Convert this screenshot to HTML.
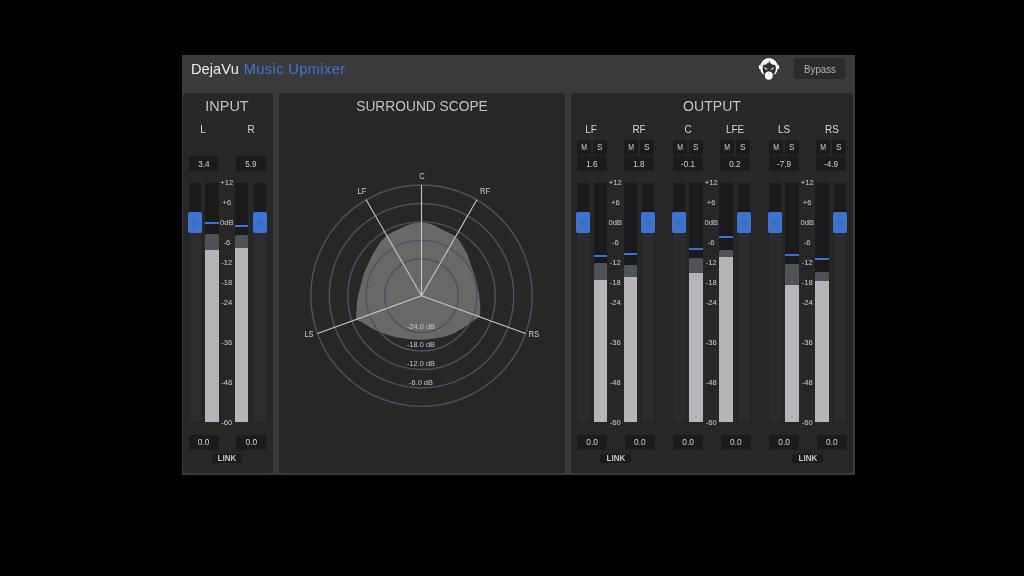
<!DOCTYPE html>
<html><head><meta charset="utf-8"><title>DejaVu Music Upmixer</title><style>
html,body{margin:0;padding:0;background:#000;}
body{width:1024px;height:576px;position:relative;overflow:hidden;font-family:"Liberation Sans",sans-serif;}
.a{position:absolute;}
.win{left:182px;top:55px;width:673px;height:420px;background:#3a3a3a;}
.panel{background:#272727;border-radius:3px;top:92.5px;height:380.3px;}
.t{position:absolute;white-space:nowrap;text-align:center;transform:translate(-50%,-50%);line-height:1;}
.box{background:#1b1b1d;border-radius:1.5px;}
.slotU{background:#1b1b1d;border-radius:1px;}
.slotL{background:#2c2d30;}
.thumb{background:#3d74d4;border-radius:2px;}
.gl{background:#3f63a8;height:1px;}
.mbg{background:#1a1a1d;}
.mdk{background:#4f5257;border-radius:1.5px 1.5px 0 0;}
.mlt{background:#b5b5b9;}
.pk{background:#3c74d6;height:2px;}
svg{position:absolute;left:0;top:0;}
#root{position:absolute;left:0;top:0;width:1024px;height:576px;will-change:transform;}
</style></head><body><div id="root">
<div class="a win"></div>
<div class="a panel" style="left:182.6px;width:90.3px;"></div>
<div class="a panel" style="left:279px;width:285.7px;"></div>
<div class="a panel" style="left:571.1px;width:282px;"></div>
<div class="t" style="left:214.9px;top:69.4px;font-size:14.6px;color:#ececec;letter-spacing:0.1px;">DejaVu</div>
<div class="t" style="left:294.6px;top:69.4px;font-size:14.6px;color:#3d78d8;letter-spacing:0.4px;">Music Upmixer</div>
<div class="a" style="left:794.2px;top:58.2px;width:50.7px;height:21.2px;background:#2b2b2b;border-radius:2.5px;"></div>
<div class="t" style="left:819.6px;top:70.2px;font-size:10px;color:#b4b4b4;transform:translate(-50%,-50%) scaleX(0.97);">Bypass</div>
<div class="t" style="left:227.4px;top:105.8px;font-size:14.6px;color:#c2c2c6;transform:translate(-50%,-50%) scaleX(0.99);">INPUT</div>
<div class="t" style="left:421.6px;top:105.8px;font-size:14.6px;color:#c2c2c6;transform:translate(-50%,-50%) scaleX(0.943);">SURROUND SCOPE</div>
<div class="t" style="left:711.6px;top:105.8px;font-size:14.6px;color:#c2c2c6;transform:translate(-50%,-50%) scaleX(0.963);">OUTPUT</div>
<div class="t" style="left:203.0px;top:129.2px;font-size:11px;color:#d6d6d6;transform:translate(-50%,-50%) scaleX(0.9);">L</div>
<div class="a box" style="left:188.6px;top:156.3px;width:29.9px;height:14.5px;"></div>
<div class="t" style="left:203.5px;top:163.8px;font-size:8.4px;color:#d0d0d0;transform:translate(-50%,-50%) scaleX(0.97);">3.4</div>
<div class="a box" style="left:188.6px;top:435.2px;width:30.2px;height:14.5px;"></div>
<div class="t" style="left:203.7px;top:442.4px;font-size:8.4px;color:#d0d0d0;">0.0</div>
<div class="t" style="left:251.1px;top:129.2px;font-size:11px;color:#d6d6d6;transform:translate(-50%,-50%) scaleX(0.9);">R</div>
<div class="a box" style="left:235.7px;top:156.3px;width:29.9px;height:14.5px;"></div>
<div class="t" style="left:250.6px;top:163.8px;font-size:8.4px;color:#d0d0d0;transform:translate(-50%,-50%) scaleX(0.97);">5.9</div>
<div class="a box" style="left:236.2px;top:435.2px;width:30.2px;height:14.5px;"></div>
<div class="t" style="left:251.3px;top:442.4px;font-size:8.4px;color:#d0d0d0;">0.0</div>
<div class="a slotU" style="left:188.9px;top:183px;width:12px;height:40px;"></div>
<div class="a slotL" style="left:188.9px;top:223px;width:12px;height:199.2px;"></div>
<div class="a thumb" style="left:187.9px;top:212px;width:14px;height:21px;"></div>
<div class="a gl" style="left:192.4px;top:219.5px;width:5.0px;"></div>
<div class="a gl" style="left:191.3px;top:222.0px;width:7.2px;"></div>
<div class="a gl" style="left:192.4px;top:224.7px;width:5.0px;"></div>
<div class="a mbg" style="left:205.0px;top:183px;width:13.5px;height:239.2px;"></div>
<div class="a pk" style="left:205.0px;top:221.9px;width:13.5px;"></div>
<div class="a mdk" style="left:205.0px;top:233.8px;width:13.5px;height:17.4px;"></div>
<div class="a mlt" style="left:205.0px;top:250.2px;width:13.5px;height:172.0px;"></div>
<div class="a mbg" style="left:235.1px;top:183px;width:13.4px;height:239.2px;"></div>
<div class="a pk" style="left:235.1px;top:224.9px;width:13.4px;"></div>
<div class="a mdk" style="left:235.1px;top:234.9px;width:13.4px;height:14.0px;"></div>
<div class="a mlt" style="left:235.1px;top:247.9px;width:13.4px;height:174.3px;"></div>
<div class="a slotU" style="left:253.7px;top:183px;width:12px;height:40px;"></div>
<div class="a slotL" style="left:253.7px;top:223px;width:12px;height:199.2px;"></div>
<div class="a thumb" style="left:252.7px;top:212px;width:14px;height:21px;"></div>
<div class="a gl" style="left:257.2px;top:219.5px;width:5.0px;"></div>
<div class="a gl" style="left:256.1px;top:222.0px;width:7.2px;"></div>
<div class="a gl" style="left:257.2px;top:224.7px;width:5.0px;"></div>
<div class="t" style="left:226.8px;top:183.1px;font-size:7.6px;color:#d0d0d0;">+12</div>
<div class="t" style="left:226.8px;top:203.1px;font-size:7.6px;color:#d0d0d0;">+6</div>
<div class="t" style="left:226.8px;top:223.1px;font-size:7.6px;color:#d0d0d0;">0dB</div>
<div class="t" style="left:226.8px;top:243.1px;font-size:7.6px;color:#d0d0d0;">-6</div>
<div class="t" style="left:226.8px;top:263.1px;font-size:7.6px;color:#d0d0d0;">-12</div>
<div class="t" style="left:226.8px;top:283.1px;font-size:7.6px;color:#d0d0d0;">-18</div>
<div class="t" style="left:226.8px;top:303.1px;font-size:7.6px;color:#d0d0d0;">-24</div>
<div class="t" style="left:226.8px;top:343.1px;font-size:7.6px;color:#d0d0d0;">-36</div>
<div class="t" style="left:226.8px;top:383.1px;font-size:7.6px;color:#d0d0d0;">-48</div>
<div class="t" style="left:226.8px;top:423.1px;font-size:7.6px;color:#d0d0d0;">-60</div>
<div class="t" style="left:590.5px;top:129.2px;font-size:11px;color:#d6d6d6;transform:translate(-50%,-50%) scaleX(0.9);">LF</div>
<div class="a box" style="left:577.1px;top:140.2px;width:14.1px;height:14.4px;"></div>
<div class="a box" style="left:592.8px;top:140.2px;width:14.1px;height:14.4px;"></div>
<div class="t" style="left:584.2px;top:147.3px;font-size:8.4px;color:#d0d0d0;transform:translate(-50%,-50%) scaleX(0.82);">M</div>
<div class="t" style="left:599.8px;top:147.3px;font-size:8.4px;color:#d0d0d0;">S</div>
<div class="a box" style="left:577.1px;top:156.3px;width:29.9px;height:14.5px;"></div>
<div class="t" style="left:592.0px;top:163.8px;font-size:8.4px;color:#d0d0d0;transform:translate(-50%,-50%) scaleX(0.97);">1.6</div>
<div class="a box" style="left:577.1px;top:435.2px;width:30.2px;height:14.5px;"></div>
<div class="t" style="left:592.2px;top:442.4px;font-size:8.4px;color:#d0d0d0;">0.0</div>
<div class="t" style="left:638.8px;top:129.2px;font-size:11px;color:#d6d6d6;transform:translate(-50%,-50%) scaleX(0.9);">RF</div>
<div class="a box" style="left:624.1px;top:140.2px;width:14.1px;height:14.4px;"></div>
<div class="a box" style="left:639.8px;top:140.2px;width:14.1px;height:14.4px;"></div>
<div class="t" style="left:631.2px;top:147.3px;font-size:8.4px;color:#d0d0d0;transform:translate(-50%,-50%) scaleX(0.82);">M</div>
<div class="t" style="left:646.8px;top:147.3px;font-size:8.4px;color:#d0d0d0;">S</div>
<div class="a box" style="left:624.1px;top:156.3px;width:29.9px;height:14.5px;"></div>
<div class="t" style="left:639.0px;top:163.8px;font-size:8.4px;color:#d0d0d0;transform:translate(-50%,-50%) scaleX(0.97);">1.8</div>
<div class="a box" style="left:624.8px;top:435.2px;width:30.2px;height:14.5px;"></div>
<div class="t" style="left:639.9px;top:442.4px;font-size:8.4px;color:#d0d0d0;">0.0</div>
<div class="a slotU" style="left:577.4px;top:183px;width:12px;height:40px;"></div>
<div class="a slotL" style="left:577.4px;top:223px;width:12px;height:199.2px;"></div>
<div class="a thumb" style="left:576.4px;top:212px;width:14px;height:21px;"></div>
<div class="a gl" style="left:580.9px;top:219.5px;width:5.0px;"></div>
<div class="a gl" style="left:579.8px;top:222.0px;width:7.2px;"></div>
<div class="a gl" style="left:580.9px;top:224.7px;width:5.0px;"></div>
<div class="a mbg" style="left:593.5px;top:183px;width:13.5px;height:239.2px;"></div>
<div class="a pk" style="left:593.5px;top:254.8px;width:13.5px;"></div>
<div class="a mdk" style="left:593.5px;top:263.1px;width:13.5px;height:17.5px;"></div>
<div class="a mlt" style="left:593.5px;top:279.6px;width:13.5px;height:142.6px;"></div>
<div class="a mbg" style="left:623.5px;top:183px;width:13.4px;height:239.2px;"></div>
<div class="a pk" style="left:623.5px;top:253.3px;width:13.4px;"></div>
<div class="a mdk" style="left:623.5px;top:264.7px;width:13.4px;height:13.0px;"></div>
<div class="a mlt" style="left:623.5px;top:276.7px;width:13.4px;height:145.5px;"></div>
<div class="a slotU" style="left:642.1px;top:183px;width:12px;height:40px;"></div>
<div class="a slotL" style="left:642.1px;top:223px;width:12px;height:199.2px;"></div>
<div class="a thumb" style="left:641.1px;top:212px;width:14px;height:21px;"></div>
<div class="a gl" style="left:645.6px;top:219.5px;width:5.0px;"></div>
<div class="a gl" style="left:644.5px;top:222.0px;width:7.2px;"></div>
<div class="a gl" style="left:645.6px;top:224.7px;width:5.0px;"></div>
<div class="t" style="left:615.3px;top:183.1px;font-size:7.6px;color:#d0d0d0;">+12</div>
<div class="t" style="left:615.3px;top:203.1px;font-size:7.6px;color:#d0d0d0;">+6</div>
<div class="t" style="left:615.3px;top:223.1px;font-size:7.6px;color:#d0d0d0;">0dB</div>
<div class="t" style="left:615.3px;top:243.1px;font-size:7.6px;color:#d0d0d0;">-6</div>
<div class="t" style="left:615.3px;top:263.1px;font-size:7.6px;color:#d0d0d0;">-12</div>
<div class="t" style="left:615.3px;top:283.1px;font-size:7.6px;color:#d0d0d0;">-18</div>
<div class="t" style="left:615.3px;top:303.1px;font-size:7.6px;color:#d0d0d0;">-24</div>
<div class="t" style="left:615.3px;top:343.1px;font-size:7.6px;color:#d0d0d0;">-36</div>
<div class="t" style="left:615.3px;top:383.1px;font-size:7.6px;color:#d0d0d0;">-48</div>
<div class="t" style="left:615.3px;top:423.1px;font-size:7.6px;color:#d0d0d0;">-60</div>
<div class="t" style="left:688.3px;top:129.2px;font-size:11px;color:#d6d6d6;transform:translate(-50%,-50%) scaleX(0.9);">C</div>
<div class="a box" style="left:673.0px;top:140.2px;width:14.1px;height:14.4px;"></div>
<div class="a box" style="left:688.7px;top:140.2px;width:14.1px;height:14.4px;"></div>
<div class="t" style="left:680.1px;top:147.3px;font-size:8.4px;color:#d0d0d0;transform:translate(-50%,-50%) scaleX(0.82);">M</div>
<div class="t" style="left:695.7px;top:147.3px;font-size:8.4px;color:#d0d0d0;">S</div>
<div class="a box" style="left:673.0px;top:156.3px;width:29.9px;height:14.5px;"></div>
<div class="t" style="left:687.9px;top:163.8px;font-size:8.4px;color:#d0d0d0;transform:translate(-50%,-50%) scaleX(0.97);">-0.1</div>
<div class="a box" style="left:673.0px;top:435.2px;width:30.2px;height:14.5px;"></div>
<div class="t" style="left:688.1px;top:442.4px;font-size:8.4px;color:#d0d0d0;">0.0</div>
<div class="t" style="left:735.2px;top:129.2px;font-size:11px;color:#d6d6d6;transform:translate(-50%,-50%) scaleX(0.9);">LFE</div>
<div class="a box" style="left:720.0px;top:140.2px;width:14.1px;height:14.4px;"></div>
<div class="a box" style="left:735.7px;top:140.2px;width:14.1px;height:14.4px;"></div>
<div class="t" style="left:727.1px;top:147.3px;font-size:8.4px;color:#d0d0d0;transform:translate(-50%,-50%) scaleX(0.82);">M</div>
<div class="t" style="left:742.7px;top:147.3px;font-size:8.4px;color:#d0d0d0;">S</div>
<div class="a box" style="left:720.0px;top:156.3px;width:29.9px;height:14.5px;"></div>
<div class="t" style="left:734.9px;top:163.8px;font-size:8.4px;color:#d0d0d0;transform:translate(-50%,-50%) scaleX(0.97);">0.2</div>
<div class="a box" style="left:720.7px;top:435.2px;width:30.2px;height:14.5px;"></div>
<div class="t" style="left:735.8px;top:442.4px;font-size:8.4px;color:#d0d0d0;">0.0</div>
<div class="a slotU" style="left:673.3px;top:183px;width:12px;height:40px;"></div>
<div class="a slotL" style="left:673.3px;top:223px;width:12px;height:199.2px;"></div>
<div class="a thumb" style="left:672.3px;top:212px;width:14px;height:21px;"></div>
<div class="a gl" style="left:676.8px;top:219.5px;width:5.0px;"></div>
<div class="a gl" style="left:675.7px;top:222.0px;width:7.2px;"></div>
<div class="a gl" style="left:676.8px;top:224.7px;width:5.0px;"></div>
<div class="a mbg" style="left:689.4px;top:183px;width:13.5px;height:239.2px;"></div>
<div class="a pk" style="left:689.4px;top:247.7px;width:13.5px;"></div>
<div class="a mdk" style="left:689.4px;top:258.4px;width:13.5px;height:15.3px;"></div>
<div class="a mlt" style="left:689.4px;top:272.7px;width:13.5px;height:149.5px;"></div>
<div class="a mbg" style="left:719.4px;top:183px;width:13.4px;height:239.2px;"></div>
<div class="a pk" style="left:719.4px;top:236.0px;width:13.4px;"></div>
<div class="a mdk" style="left:719.4px;top:250.0px;width:13.4px;height:7.8px;"></div>
<div class="a mlt" style="left:719.4px;top:256.8px;width:13.4px;height:165.4px;"></div>
<div class="a slotU" style="left:738.0px;top:183px;width:12px;height:40px;"></div>
<div class="a slotL" style="left:738.0px;top:223px;width:12px;height:199.2px;"></div>
<div class="a thumb" style="left:737.0px;top:212px;width:14px;height:21px;"></div>
<div class="a gl" style="left:741.5px;top:219.5px;width:5.0px;"></div>
<div class="a gl" style="left:740.4px;top:222.0px;width:7.2px;"></div>
<div class="a gl" style="left:741.5px;top:224.7px;width:5.0px;"></div>
<div class="t" style="left:711.2px;top:183.1px;font-size:7.6px;color:#d0d0d0;">+12</div>
<div class="t" style="left:711.2px;top:203.1px;font-size:7.6px;color:#d0d0d0;">+6</div>
<div class="t" style="left:711.2px;top:223.1px;font-size:7.6px;color:#d0d0d0;">0dB</div>
<div class="t" style="left:711.2px;top:243.1px;font-size:7.6px;color:#d0d0d0;">-6</div>
<div class="t" style="left:711.2px;top:263.1px;font-size:7.6px;color:#d0d0d0;">-12</div>
<div class="t" style="left:711.2px;top:283.1px;font-size:7.6px;color:#d0d0d0;">-18</div>
<div class="t" style="left:711.2px;top:303.1px;font-size:7.6px;color:#d0d0d0;">-24</div>
<div class="t" style="left:711.2px;top:343.1px;font-size:7.6px;color:#d0d0d0;">-36</div>
<div class="t" style="left:711.2px;top:383.1px;font-size:7.6px;color:#d0d0d0;">-48</div>
<div class="t" style="left:711.2px;top:423.1px;font-size:7.6px;color:#d0d0d0;">-60</div>
<div class="t" style="left:783.8px;top:129.2px;font-size:11px;color:#d6d6d6;transform:translate(-50%,-50%) scaleX(0.9);">LS</div>
<div class="a box" style="left:769.0px;top:140.2px;width:14.1px;height:14.4px;"></div>
<div class="a box" style="left:784.7px;top:140.2px;width:14.1px;height:14.4px;"></div>
<div class="t" style="left:776.1px;top:147.3px;font-size:8.4px;color:#d0d0d0;transform:translate(-50%,-50%) scaleX(0.82);">M</div>
<div class="t" style="left:791.7px;top:147.3px;font-size:8.4px;color:#d0d0d0;">S</div>
<div class="a box" style="left:769.0px;top:156.3px;width:29.9px;height:14.5px;"></div>
<div class="t" style="left:783.9px;top:163.8px;font-size:8.4px;color:#d0d0d0;transform:translate(-50%,-50%) scaleX(0.97);">-7.9</div>
<div class="a box" style="left:769.0px;top:435.2px;width:30.2px;height:14.5px;"></div>
<div class="t" style="left:784.1px;top:442.4px;font-size:8.4px;color:#d0d0d0;">0.0</div>
<div class="t" style="left:832.1px;top:129.2px;font-size:11px;color:#d6d6d6;transform:translate(-50%,-50%) scaleX(0.9);">RS</div>
<div class="a box" style="left:816.0px;top:140.2px;width:14.1px;height:14.4px;"></div>
<div class="a box" style="left:831.7px;top:140.2px;width:14.1px;height:14.4px;"></div>
<div class="t" style="left:823.1px;top:147.3px;font-size:8.4px;color:#d0d0d0;transform:translate(-50%,-50%) scaleX(0.82);">M</div>
<div class="t" style="left:838.7px;top:147.3px;font-size:8.4px;color:#d0d0d0;">S</div>
<div class="a box" style="left:816.0px;top:156.3px;width:29.9px;height:14.5px;"></div>
<div class="t" style="left:830.9px;top:163.8px;font-size:8.4px;color:#d0d0d0;transform:translate(-50%,-50%) scaleX(0.97);">-4.9</div>
<div class="a box" style="left:816.7px;top:435.2px;width:30.2px;height:14.5px;"></div>
<div class="t" style="left:831.8px;top:442.4px;font-size:8.4px;color:#d0d0d0;">0.0</div>
<div class="a slotU" style="left:769.3px;top:183px;width:12px;height:40px;"></div>
<div class="a slotL" style="left:769.3px;top:223px;width:12px;height:199.2px;"></div>
<div class="a thumb" style="left:768.3px;top:212px;width:14px;height:21px;"></div>
<div class="a gl" style="left:772.8px;top:219.5px;width:5.0px;"></div>
<div class="a gl" style="left:771.7px;top:222.0px;width:7.2px;"></div>
<div class="a gl" style="left:772.8px;top:224.7px;width:5.0px;"></div>
<div class="a mbg" style="left:785.4px;top:183px;width:13.5px;height:239.2px;"></div>
<div class="a pk" style="left:785.4px;top:254.0px;width:13.5px;"></div>
<div class="a mdk" style="left:785.4px;top:263.6px;width:13.5px;height:21.9px;"></div>
<div class="a mlt" style="left:785.4px;top:284.5px;width:13.5px;height:137.7px;"></div>
<div class="a mbg" style="left:815.4px;top:183px;width:13.4px;height:239.2px;"></div>
<div class="a pk" style="left:815.4px;top:258.2px;width:13.4px;"></div>
<div class="a mdk" style="left:815.4px;top:271.8px;width:13.4px;height:9.8px;"></div>
<div class="a mlt" style="left:815.4px;top:280.6px;width:13.4px;height:141.6px;"></div>
<div class="a slotU" style="left:834.0px;top:183px;width:12px;height:40px;"></div>
<div class="a slotL" style="left:834.0px;top:223px;width:12px;height:199.2px;"></div>
<div class="a thumb" style="left:833.0px;top:212px;width:14px;height:21px;"></div>
<div class="a gl" style="left:837.5px;top:219.5px;width:5.0px;"></div>
<div class="a gl" style="left:836.4px;top:222.0px;width:7.2px;"></div>
<div class="a gl" style="left:837.5px;top:224.7px;width:5.0px;"></div>
<div class="t" style="left:807.2px;top:183.1px;font-size:7.6px;color:#d0d0d0;">+12</div>
<div class="t" style="left:807.2px;top:203.1px;font-size:7.6px;color:#d0d0d0;">+6</div>
<div class="t" style="left:807.2px;top:223.1px;font-size:7.6px;color:#d0d0d0;">0dB</div>
<div class="t" style="left:807.2px;top:243.1px;font-size:7.6px;color:#d0d0d0;">-6</div>
<div class="t" style="left:807.2px;top:263.1px;font-size:7.6px;color:#d0d0d0;">-12</div>
<div class="t" style="left:807.2px;top:283.1px;font-size:7.6px;color:#d0d0d0;">-18</div>
<div class="t" style="left:807.2px;top:303.1px;font-size:7.6px;color:#d0d0d0;">-24</div>
<div class="t" style="left:807.2px;top:343.1px;font-size:7.6px;color:#d0d0d0;">-36</div>
<div class="t" style="left:807.2px;top:383.1px;font-size:7.6px;color:#d0d0d0;">-48</div>
<div class="t" style="left:807.2px;top:423.1px;font-size:7.6px;color:#d0d0d0;">-60</div>
<div class="a box" style="left:212.0px;top:453.7px;width:30.4px;height:8.9px;"></div>
<div class="t" style="left:227.2px;top:459.3px;font-size:9.3px;color:#c6c6c6;font-weight:bold;transform:translate(-50%,-50%) scaleX(0.87);">LINK</div>
<div class="a box" style="left:600.4px;top:453.7px;width:30.4px;height:8.9px;"></div>
<div class="t" style="left:615.6px;top:459.3px;font-size:9.3px;color:#c6c6c6;font-weight:bold;transform:translate(-50%,-50%) scaleX(0.87);">LINK</div>
<div class="a box" style="left:792.4px;top:453.7px;width:30.4px;height:8.9px;"></div>
<div class="t" style="left:807.6px;top:459.3px;font-size:9.3px;color:#c6c6c6;font-weight:bold;transform:translate(-50%,-50%) scaleX(0.87);">LINK</div>
<svg width="1024" height="576" viewBox="0 0 1024 576">
<path d="M356.1 319.3C356.1 318.5 356.1 316.1 356.2 314.7C356.3 313.3 356.4 312.6 356.5 310.8C356.6 309.0 356.7 306.2 356.9 303.9C357.1 301.6 357.5 298.8 357.9 296.9C358.2 295.0 358.5 293.9 358.8 292.7C359.1 291.5 359.3 291.3 359.7 289.7C360.1 288.1 360.7 285.1 361.3 282.8C361.9 280.5 362.4 278.1 363.2 275.8C363.9 273.5 364.8 271.2 365.8 268.9C366.8 266.6 368.0 264.2 369.1 261.9C370.2 259.6 371.6 256.7 372.5 255.0C373.4 253.3 373.5 253.1 374.3 251.7C375.1 250.3 376.2 248.2 377.4 246.4C378.6 244.6 379.9 242.6 381.5 240.8C383.1 239.0 384.7 237.1 386.7 235.6C388.7 234.1 391.1 232.9 393.3 231.8C395.5 230.7 397.6 229.8 399.9 228.8C402.2 227.8 404.6 226.4 406.9 225.5C409.2 224.6 411.5 223.8 413.9 223.3C416.3 222.8 419.2 222.5 421.5 222.5C423.8 222.5 425.6 222.8 427.8 223.3C430.0 223.8 432.7 224.9 434.7 225.8C436.7 226.6 437.9 227.4 439.9 228.4C441.9 229.4 444.8 230.8 446.9 231.8C449.0 232.8 451.0 233.8 452.5 234.6C454.0 235.4 454.9 235.7 456.0 236.7C457.1 237.7 458.2 239.2 459.4 240.8C460.6 242.4 461.7 244.4 462.9 246.4C464.1 248.4 465.5 250.8 466.4 252.6C467.3 254.4 467.7 255.6 468.3 257.2C468.9 258.8 469.2 259.9 469.9 261.9C470.6 263.8 471.6 266.6 472.4 268.9C473.2 271.2 474.1 273.5 474.8 275.8C475.5 278.1 475.9 280.5 476.5 282.8C477.1 285.1 477.7 287.6 478.1 289.7C478.5 291.8 478.8 292.8 479.1 295.2C479.4 297.6 479.9 301.3 480.1 303.9C480.3 306.5 480.2 308.7 480.2 310.8C480.2 312.9 479.9 315.7 479.9 316.7C479.6 316.9 479.1 317.3 477.9 318.1C476.6 318.9 474.2 320.4 472.4 321.6C470.6 322.8 468.8 324.0 466.8 325.4C464.8 326.8 462.4 328.4 460.2 329.8C457.9 331.2 455.6 332.6 453.3 333.6C451.0 334.6 448.7 335.3 446.4 336.0C444.1 336.7 441.7 337.3 439.4 337.8C437.1 338.3 434.8 338.5 432.5 338.8C430.2 339.1 427.7 339.3 425.6 339.5C423.5 339.6 421.8 339.7 420.0 339.7C418.2 339.7 416.7 339.6 414.7 339.5C412.7 339.4 410.1 339.2 407.8 339.0C405.5 338.8 403.1 338.5 400.8 338.1C398.5 337.7 396.2 337.3 393.9 336.7C391.6 336.1 389.2 335.4 386.9 334.6C384.6 333.9 382.1 333.0 380.0 332.2C377.9 331.4 376.2 330.6 374.2 329.6C372.2 328.6 369.9 327.3 367.9 326.1C365.9 324.9 364.4 323.7 362.4 322.6C360.4 321.5 357.1 319.8 356.1 319.3Z" fill="#686868"/>
<circle cx="421.5" cy="295.7" r="36.90" fill="none" stroke="#4d535d" stroke-width="1.4"/>
<circle cx="421.5" cy="295.7" r="55.35" fill="none" stroke="#4d535d" stroke-width="1.4"/>
<circle cx="421.5" cy="295.7" r="73.80" fill="none" stroke="#4d535d" stroke-width="1.4"/>
<circle cx="421.5" cy="295.7" r="92.25" fill="none" stroke="#4d535d" stroke-width="1.4"/>
<circle cx="421.5" cy="295.7" r="110.70" fill="none" stroke="#4d535d" stroke-width="1.4"/>
<line x1="421.5" y1="295.7" x2="421.50" y2="185.00" stroke="#c6c6c6" stroke-width="1.1"/>
<line x1="421.5" y1="295.7" x2="366.15" y2="199.83" stroke="#c6c6c6" stroke-width="1.1"/>
<line x1="421.5" y1="295.7" x2="476.85" y2="199.83" stroke="#c6c6c6" stroke-width="1.1"/>
<line x1="421.5" y1="295.7" x2="317.48" y2="333.56" stroke="#c6c6c6" stroke-width="1.1"/>
<line x1="421.5" y1="295.7" x2="525.52" y2="333.56" stroke="#c6c6c6" stroke-width="1.1"/>
</svg>
<div class="t" style="left:421.4px;top:326.59999999999997px;font-size:7.7px;color:#c8c8c8;transform:translate(-50%,-50%) scaleX(0.96);">-24.0 dB</div>
<div class="t" style="left:421.4px;top:345.2px;font-size:7.7px;color:#c8c8c8;transform:translate(-50%,-50%) scaleX(0.96);">-18.0 dB</div>
<div class="t" style="left:421.4px;top:363.7px;font-size:7.7px;color:#c8c8c8;transform:translate(-50%,-50%) scaleX(0.96);">-12.0 dB</div>
<div class="t" style="left:421.4px;top:382.8px;font-size:7.7px;color:#c8c8c8;transform:translate(-50%,-50%) scaleX(0.96);">-6.0 dB</div>
<div class="t" style="left:421.5px;top:176.9px;font-size:8.2px;color:#d2d2d2;transform:translate(-50%,-50%) scaleX(0.92);">C</div>
<div class="t" style="left:361.8px;top:191.8px;font-size:8.2px;color:#d2d2d2;transform:translate(-50%,-50%) scaleX(0.92);">LF</div>
<div class="t" style="left:485.1px;top:191.8px;font-size:8.2px;color:#d2d2d2;transform:translate(-50%,-50%) scaleX(0.92);">RF</div>
<div class="t" style="left:309.1px;top:335.1px;font-size:8.2px;color:#d2d2d2;transform:translate(-50%,-50%) scaleX(0.92);">LS</div>
<div class="t" style="left:533.7px;top:335.0px;font-size:8.2px;color:#d2d2d2;transform:translate(-50%,-50%) scaleX(0.92);">RS</div>
<svg style="left:754px;top:54px" width="30" height="30" viewBox="0 0 30 30">
<defs><clipPath id="hc"><rect x="0" y="0" width="30" height="20.3"/></clipPath></defs>
<ellipse cx="15" cy="13.5" rx="8.9" ry="9.6" fill="#fff" clip-path="url(#hc)"/>
<rect x="4.9" y="11.1" width="1.8" height="3.8" rx="0.7" fill="#fff"/>
<rect x="23.3" y="11.1" width="1.8" height="3.8" rx="0.7" fill="#fff"/>
<path d="M8.6 14 C8.6 12.5 9 11.3 9.6 10.8 L12.2 10.5 L13.4 8.9 L14.2 9.5 L15.3 6.8 L16.5 9.2 L17.5 9.7 L18.2 10.5 L20.6 10.8 C21.4 11.3 21.9 12.5 21.9 14 C21.9 17 20.8 19.2 19.2 20.6 L10.8 20.6 C9.4 19.2 8.6 17 8.6 14 Z" fill="#303030"/>
<polygon points="10.2,13.0 13.8,15.3 12.6,15.8 11.0,14.7" fill="#fff"/>
<polygon points="20.1,13.0 16.5,15.3 17.7,15.8 19.3,14.7" fill="#fff"/>
<ellipse cx="14.85" cy="21.6" rx="3.95" ry="4.2" fill="#fff"/>
<ellipse cx="14.85" cy="19.5" rx="0.8" ry="0.3" fill="#777"/>
</svg>
</div></body></html>
